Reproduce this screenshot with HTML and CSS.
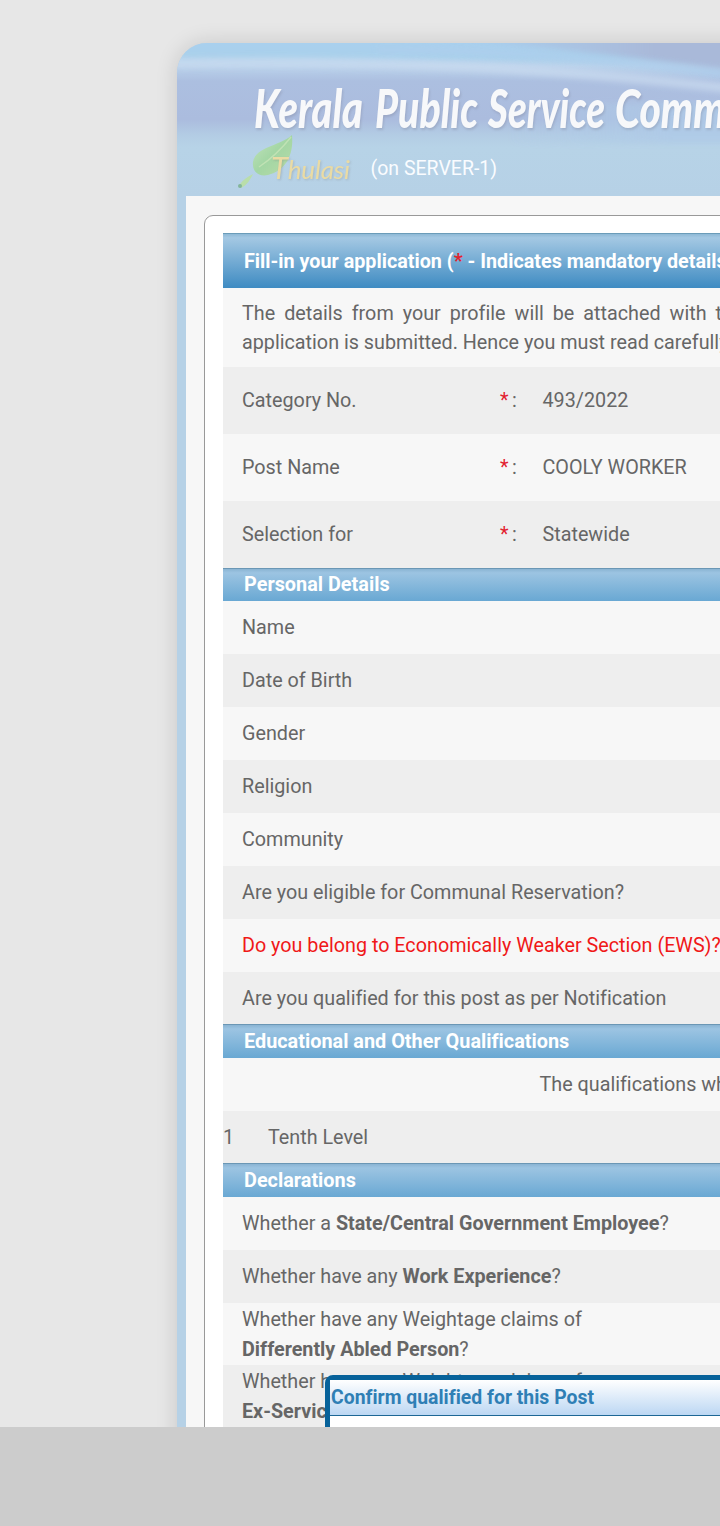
FILE: index.html
```
<!DOCTYPE html>
<html lang="en">
<head>
    <meta charset="UTF-8">
    <meta name="viewport" content="width=device-width, initial-scale=1.0">
    <title>Kerala Public Service Commission</title>
    <link rel="stylesheet" href="styles.css">
</head>
<body>
    <div class="screen">
        <div class="page">
            <!-- Banner -->
            <header class="banner">
                <svg width="700" height="153" viewBox="0 0 700 153">
                    <defs>
                        <linearGradient id="sky" x1="0" y1="0" x2="0" y2="1">
                            <stop offset="0" stop-color="#a9d0ee"/>
                            <stop offset="0.09" stop-color="#a9d0eb"/>
                            <stop offset="0.15" stop-color="#bad2eb"/>
                            <stop offset="0.25" stop-color="#acbfe0"/>
                            <stop offset="0.5" stop-color="#abbcde"/>
                            <stop offset="0.6" stop-color="#b3cce4"/>
                            <stop offset="0.68" stop-color="#b7d3e7"/>
                            <stop offset="1" stop-color="#b6d1e6"/>
                        </linearGradient>
                        <linearGradient id="right" x1="0" y1="0" x2="1" y2="0">
                            <stop offset="0.2" stop-color="#afcbe8" stop-opacity="0"/>
                            <stop offset="0.55" stop-color="#afcbe8" stop-opacity="1"/>
                        </linearGradient>
                        <linearGradient id="corner" x1="0" y1="0" x2="1" y2="0">
                            <stop offset="0" stop-color="#adc4e5" stop-opacity="0.2"/>
                            <stop offset="0.7" stop-color="#a9b9d9"/>
                        </linearGradient>
                        <linearGradient id="leaf" x1="0" y1="0" x2="1" y2="1">
                            <stop offset="0" stop-color="#c3e3bd"/>
                            <stop offset="0.5" stop-color="#a3d6a4"/>
                            <stop offset="1" stop-color="#b9dca8"/>
                        </linearGradient>
                        <filter id="soft" x="-10%" y="-100%" width="120%" height="300%"><feGaussianBlur stdDeviation="3"/></filter>
                        <filter id="fine"><feGaussianBlur stdDeviation="0.5"/></filter>
                    </defs>
                    <rect width="700" height="153" fill="url(#sky)"/>
                    <path d="M240 60 H700 V100 H240Z" fill="url(#right)" opacity="0.8" filter="url(#soft)"/>
                    <path d="M270 -6 C350 4 450 14 560 30 V-12Z" fill="url(#corner)" filter="url(#soft)"/>
                    <path d="M200 7 C330 6 440 18 560 32" fill="none" stroke="#adcfed" stroke-width="8" opacity="0.8" filter="url(#soft)"/>
                    <path d="M-10 20 C220 16 380 26 560 46" fill="none" stroke="#cbdcf0" stroke-width="9" opacity="0.75" filter="url(#soft)"/>
                    <g class="banner-title">
                        <text x="77" y="85" textLength="109" lengthAdjust="spacingAndGlyphs">Kerala</text>
                        <text x="198" y="85" textLength="103" lengthAdjust="spacingAndGlyphs">Public</text>
                        <text x="311" y="85" textLength="117" lengthAdjust="spacingAndGlyphs">Service</text>
                        <text x="438" y="85" textLength="208" lengthAdjust="spacingAndGlyphs">Commission</text>
                    </g>
                    <g filter="url(#fine)">
                        <path d="M115 92 C103 103 78 104 76 119 C75 128 81 134 91 132 C108 128 117 113 115 92Z" fill="url(#leaf)"/>
                        <path d="M114 94 C103 108 94 116 82 124" fill="none" stroke="#c0e2b4" stroke-width="1.5"/>
                        <path d="M76 131 C68 135 64 139 62 143 L64 145 C70 142 73 137 76 131Z" fill="#b9deaa"/>
                        <circle cx="63" cy="143" r="2" fill="#84b69b"/>
                    </g>
                    <text class="banner-logo" x="94" y="136" textLength="79" lengthAdjust="spacing"><tspan class="banner-logo-cap">T</tspan>hulasi</text>
                    <text class="banner-server" x="193.5" y="132">(on SERVER-1)</text>
                </svg>
            </header>

            <!-- Application form -->
            <div class="content">
                <main class="panel">
                    <h1 class="title">Fill-in your application (<span class="required">*</span> - Indicates mandatory details)</h1>
                    <p class="notice"><span class="notice-line">The details from your profile will be attached with the</span><br>application is submitted. Hence you must read carefully</p>

                    <div class="row field"><span>Category No.</span><span class="required">*</span><span>:</span><span>493/2022</span></div>
                    <div class="row field light"><span>Post Name</span><span class="required">*</span><span>:</span><span>COOLY WORKER</span></div>
                    <div class="row field"><span>Selection for</span><span class="required">*</span><span>:</span><span>Statewide</span></div>

                    <h2 class="section first">Personal Details</h2>
                    <div class="row light">Name</div>
                    <div class="row">Date of Birth</div>
                    <div class="row light">Gender</div>
                    <div class="row">Religion</div>
                    <div class="row light">Community</div>
                    <div class="row">Are you eligible for Communal Reservation?</div>
                    <div class="row light alert">Do you belong to Economically Weaker Section (EWS)?</div>
                    <div class="row short">Are you qualified for this post as per Notification</div>

                    <h2 class="section">Educational and Other Qualifications</h2>
                    <div class="row light note">The qualifications which are required</div>
                    <div class="row short level"><span>1</span><span>Tenth Level</span></div>

                    <h2 class="section">Declarations</h2>
                    <div class="row light"><span>Whether a <b>State/Central Government Employee</b>?</span></div>
                    <div class="row"><span>Whether have any <b>Work Experience</b>?</span></div>
                    <div class="row tall light"><span>Whether have any Weightage claims of<br><b>Differently Abled Person</b>?</span></div>
                    <div class="row tall"><span>Whether have any Weightage claims of<br><b>Ex-Servicemen</b>?</span></div>
                </main>
            </div>
        </div>

        <div class="dialog">
            <div class="dialog-title">Confirm qualified for this Post</div>
        </div>
    </div>
</body>
</html>
```
FILE: styles.css
```
* {
    box-sizing: border-box;
}
body {
    margin: 0;
    height: 1526px;
    overflow: hidden;
    background-color: #ccc;
    font-family: Roboto, sans-serif;
    font-size: 19.75px;
    font-variant-ligatures: none;
    color: #666;
}
.screen {
    position: relative;
    height: 1427px;
    padding: 43px 0 0 177px;
    overflow: hidden;
    background-color: #e7e7e7;
}
.page {
    width: 700px;
    height: 1500px;
    background-color: #b6d1e6;
    border-radius: 30px 0 0 0;
    box-shadow: 0 0 22px rgba(0, 0, 0, 0.14);
}
.banner {
    height: 153px;
    border-radius: 30px 0 0 0;
    overflow: hidden;
}
.banner svg {
    display: block;
}
.banner-title {
    font-family: Lato, sans-serif;
    font-size: 54px;
    font-style: italic;
    font-weight: 900;
    fill: #f7f8fa;
    filter: drop-shadow(1px 2px 1px rgba(110, 110, 130, 0.25));
}
.banner-logo {
    font-family: Lato, sans-serif;
    font-size: 26px;
    font-style: italic;
    fill: #eadba4;
    filter: drop-shadow(1px 1px 1px rgba(120, 120, 120, 0.3));
}
.banner-logo-cap {
    font-size: 31px;
}
.banner-server {
    font-size: 19.5px;
    fill: #fafcff;
}
.content {
    margin-left: 9px;
    padding: 19px 0 0 18px;
    height: 1400px;
    background-color: #f7f7f7;
}
.panel {
    width: 760px;
    height: 1400px;
    padding: 17px 18px;
    background-color: #fff;
    border: 1px solid #999;
    border-radius: 9px 0 0 0;
}
.title {
    display: flex;
    align-items: center;
    height: 55px;
    margin: 0;
    padding: 0 21px;
    border-top: 1px solid #6b9cb9;
    background: linear-gradient(#8eb9d6, #a4c8e3 7%, #3e8bc2);
    color: #fff;
    font-size: 19.75px;
    font-weight: 700;
    white-space: pre;
}
.required {
    color: #e2222f;
}
.notice {
    height: 79px;
    margin: 0;
    padding: 11px 19px;
    background-color: #f7f7f7;
    line-height: 29px;
    white-space: nowrap;
}
.notice-line {
    word-spacing: 4.1px;
}
.row {
    display: flex;
    align-items: center;
    height: 53px;
    padding: 0 19px;
    background-color: #eee;
    white-space: nowrap;
}
.light {
    background-color: #f7f7f7;
}
.field {
    display: grid;
    grid-template-columns: 258px 12px 30.5px 1fr;
    height: 67px;
}
.short {
    height: 52px;
}
.tall {
    height: 62px;
    padding-top: 2px;
    line-height: 30px;
}
.alert {
    color: #f01818;
}
.note {
    padding-left: 316.5px;
}
.level {
    display: grid;
    grid-template-columns: 45px 1fr;
    padding-left: 0;
}
.section {
    height: 34px;
    margin: 0;
    padding: 0 21px;
    border-top: 1px solid #6b97b5;
    background: linear-gradient(#8ab4d3, #9cc4e2 12%, #69a8d3);
    color: #fff;
    font-size: 19.85px;
    font-weight: 700;
    line-height: 33px;
}
.first {
    height: 33px;
    line-height: 31px;
}
.dialog {
    position: absolute;
    left: 325px;
    top: 1375px;
    width: 560px;
    height: 200px;
    border: 5px solid #07629a;
    border-radius: 8px 0 0 0;
    background-color: #fff;
}
.dialog-title {
    height: 36px;
    padding-left: 1px;
    border-bottom: 1px solid #1d6795;
    background: linear-gradient(#fff, #bcd7f3);
    color: #2f7fb5;
    font-size: 19.4px;
    font-weight: 700;
    line-height: 35px;
}
```
